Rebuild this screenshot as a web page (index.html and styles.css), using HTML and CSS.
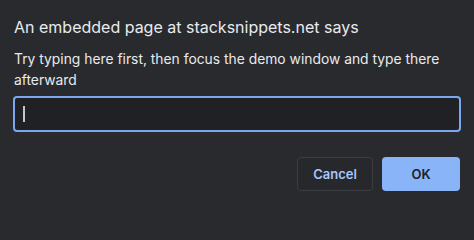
FILE: index.html
```html
<!DOCTYPE html>
<html>
<head>
<meta charset="utf-8">
<link rel="stylesheet" href="styles.css">
</head>
<body>
<div class="dialog">
  <div class="title">An embedded page at stacksnippets.net says</div>
  <div class="message">Try typing here first, then focus the demo window and type there afterward</div>
  <div class="field"><span class="caret"></span></div>
  <div class="actions">
    <button class="btn cancel">Cancel</button>
    <button class="btn ok">OK</button>
  </div>
</div>
</body>
</html>
```
FILE: styles.css
```css
html, body {
  margin: 0;
  padding: 0;
  background: #292a2d;
}
.dialog {
  width: 474px;
  height: 204px;
  box-sizing: border-box;
  padding: 14px 14px 0 14px;
  font-family: Inter, "Liberation Sans", Arial, sans-serif;
  color: #e8eaed;
  display: flex;
  flex-direction: column;
}
.title {
  font-size: 16px;
  line-height: 20px;
  margin-top: 3px;
}
.message {
  font-size: 13.85px;
  line-height: 21px;
  margin-top: 12px;
  width: 440px;
}
.field {
  margin-top: 5px;
  margin-left: -1px;
  width: 448px;
  height: 36px;
  box-sizing: border-box;
  border: 2px solid #7aa7ef;
  border-radius: 4px;
  background: #202124;
  display: flex;
  align-items: center;
  padding-left: 8px;
}
.caret {
  width: 2px;
  height: 16px;
  background: #c4c7c5;
}
.actions {
  margin-top: 25px;
  display: flex;
  justify-content: flex-end;
  gap: 9px;
}
.btn {
  height: 34px;
  box-sizing: border-box;
  border-radius: 4px;
  font-family: Inter, "Liberation Sans", Arial, sans-serif;
  font-size: 13px;
  font-weight: 600;
  padding: 0;
}
.cancel {
  width: 76px;
  background: #27282b;
  border: 1px solid #3c3d41;
  color: #a8c7fa;
}
.ok {
  width: 78px;
  background: #8ab4f8;
  border: none;
  color: #202124;
}
```
